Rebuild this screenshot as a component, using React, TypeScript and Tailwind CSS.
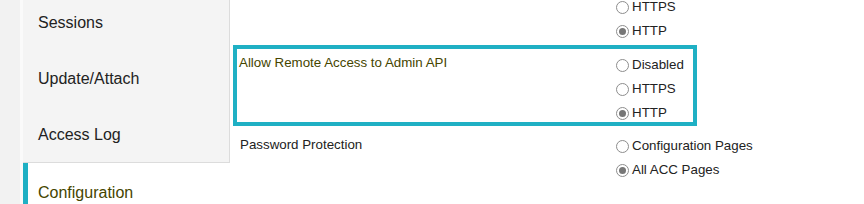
type Opt = { label: string; checked?: boolean };

type Row = {
  label?: string;
  options: Opt[];
  highlight?: boolean;
};

const rows: Row[] = [
  { options: [{ label: "HTTPS" }, { label: "HTTP", checked: true }] },
  {
    label: "Allow Remote Access to Admin API",
    highlight: true,
    options: [{ label: "Disabled" }, { label: "HTTPS" }, { label: "HTTP", checked: true }],
  },
  {
    label: "Password Protection",
    options: [{ label: "Configuration Pages" }, { label: "All ACC Pages", checked: true }],
  },
];

function Radio({ checked }: { checked?: boolean }) {
  return (
    <span className="mr-[3px] flex h-[13px] w-[13px] shrink-0 items-center justify-center rounded-full border border-[#8d8d8d] bg-white">
      {checked ? <span className="h-[7px] w-[7px] rounded-full bg-[#777]" /> : null}
    </span>
  );
}

const navItems = ["Sessions", "Update/Attach", "Access Log"];

export default function App() {
  return (
    <div
      className="flex h-[204px] w-[864px] overflow-hidden bg-white text-[#222]"
      style={{ fontFamily: '"Liberation Sans", Arial, sans-serif' }}
    >
      {/* left gutter */}
      <div className="w-[20px] shrink-0 bg-[#f2f2f2]" />
      <div className="w-[3px] shrink-0 bg-[#fafafa]" />

      {/* side nav */}
      <nav className="flex w-[207px] shrink-0 flex-col">
        <div className="flex shrink-0 flex-col border-b border-r border-[#dcdcdc] bg-[#f4f4f4]">
          {navItems.map((n, i) => (
            <div
              key={n}
              className={`flex h-[56px] shrink-0 items-center pl-[15px] pt-[2px] text-[16px] ${i === 0 ? "-mt-[6px]" : ""}`}
            >
              {n}
            </div>
          ))}
        </div>
        <div className="flex h-[56px] shrink-0 items-center border-l-[5px] border-[#1fb0c4] pl-[10px] pt-[3px] text-[16px] text-[#454500]">
          Configuration
        </div>
      </nav>

      {/* settings */}
      <div className="flex flex-col pl-[3px]">
        <div className="-mt-[11px] shrink-0" />
        {rows.map((r, i) => (
          <div
            key={i}
            className={`flex w-[464px] shrink-0 border-[4px] text-[13.33px] leading-[18px] ${
              r.highlight ? "border-[#1fb0c4]" : "border-transparent"
            } ${i === 0 ? "pb-[1px]" : ""} ${i === 2 ? "mt-[2px]" : ""}`}
          >
            <div
              className={`w-[379px] shrink-0 ${r.highlight ? "pl-[2px] pt-[5px] text-[#454500]" : "pl-[3px] pt-[4px]"}`}
            >
              {r.label}
            </div>
            <div className={`flex flex-col gap-[6px] ${r.highlight ? "pt-[7px]" : "pt-[5px]"}`}>
              {r.options.map((o) => (
                <label key={o.label} className="flex items-center whitespace-nowrap">
                  <Radio checked={o.checked} />
                  {o.label}
                </label>
              ))}
            </div>
          </div>
        ))}
      </div>
    </div>
  );
}
